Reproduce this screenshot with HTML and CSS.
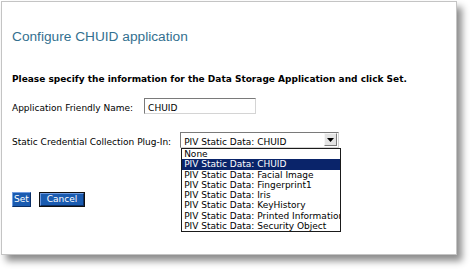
FILE: index.html
```html
<!DOCTYPE html>
<html>
<head>
<meta charset="utf-8">
<link rel="stylesheet" href="styles.css">
</head>
<body>
<div class="panel">
  <h1 class="title">Configure CHUID application</h1>
  <p class="instr">Please specify the information for the Data Storage Application and click Set.</p>
  <div class="row row-name">
    <span class="label label-name">Application Friendly Name:</span>
    <span class="input">CHUID</span>
  </div>
  <div class="row row-plugin">
    <span class="label label-plugin">Static Credential Collection Plug-In:</span>
    <div class="select">
      <span class="select-text">PIV Static Data: CHUID</span>
      <span class="arrow"><svg width="7" height="4" viewBox="0 0 7 4"><path d="M0 0h7L3.5 4z" fill="#000"/></svg></span>
      <ul class="list">
        <li>None</li>
        <li class="sel">PIV Static Data: CHUID</li>
        <li>PIV Static Data: Facial Image</li>
        <li>PIV Static Data: Fingerprint1</li>
        <li>PIV Static Data: Iris</li>
        <li>PIV Static Data: KeyHistory</li>
        <li>PIV Static Data: Printed Information</li>
        <li>PIV Static Data: Security Object</li>
      </ul>
    </div>
  </div>
  <div class="buttons">
    <span class="btn btn-set">Set</span>
    <span class="btn-focus"><span class="btn btn-cancel">Cancel</span></span>
  </div>
</div>
</body>
</html>
```
FILE: styles.css
```css
html, body {
  margin: 0;
  padding: 0;
  background: #ffffff;
}
body {
  width: 474px;
  height: 272px;
  overflow: hidden;
}
.panel {
  margin: 1px 0 0 1px;
  width: 444px;
  height: 252px;
  padding: 0 0 0 10px;
  border: 1px solid #c4c4c4;
  background: #fff;
  box-shadow: 5px 6px 7px rgba(0,0,0,0.45);
  font-family: "DejaVu Sans", Verdana, sans-serif;
  font-size: 9px;
  color: #000;
}
.title {
  margin: 27px 0 0 0;
  font-family: "Liberation Sans", Arial, sans-serif;
  font-weight: normal;
  font-size: 13.7px;
  line-height: 16px;
  color: #33708f;
}
.instr {
  margin: 29px 0 0 0;
  font-weight: bold;
  line-height: 11px;
}
.row {
  display: flex;
  align-items: center;
  height: 16px;
}
.row-name { margin-top: 13px; }
.row-plugin { margin-top: 18px; }
.label {
  line-height: 11px;
  padding-top: 4px;
}
.label-name { margin-right: 11px; }
.label-plugin { margin-right: 9px; }
.input {
  box-sizing: border-box;
  width: 112px;
  height: 16px;
  padding: 4px 3px 0 3px;
  line-height: 11px;
  border: 1px solid;
  border-color: #7a7a7a #d4d4d4 #d4d4d4 #7a7a7a;
}
.select {
  position: relative;
  box-sizing: border-box;
  width: 159px;
  height: 16px;
  display: flex;
  align-items: stretch;
  border: 1px solid;
  border-color: #7a7a7a #d4d4d4 #d4d4d4 #7a7a7a;
}
.select-text {
  flex: 1;
  padding: 4px 0 0 3px;
  line-height: 11px;
}
.arrow {
  width: 11px;
  margin: 0 1px 1px 0;
  background: #e4e4e4;
  border: 1px solid;
  border-color: #f6f6f6 #7c7c7c #7c7c7c #f6f6f6;
  display: flex;
  align-items: center;
  justify-content: center;
}
.list {
  position: absolute;
  left: 0;
  top: 15px;
  width: 158px;
  margin: 0;
  padding: 0;
  list-style: none;
  border: 1px solid #1a1a1a;
  background: #fff;
  overflow: hidden;
}
.list li {
  height: 10.25px;
  line-height: 10.25px;
  padding-left: 2px;
  white-space: nowrap;
  overflow: hidden;
}
.list li.sel {
  background: #0a246a;
  color: #fff;
}
.buttons {
  margin-top: 44px;
  display: flex;
  align-items: center;
}
.btn {
  display: block;
  box-sizing: border-box;
  height: 15px;
  line-height: 12px;
  color: #fff;
  background: #1a5bb0;
  border: 1px solid;
  border-color: #6f9be0 #0b2f66 #0b2f66 #6f9be0;
  text-align: center;
}
.btn-set {
  width: 19px;
}
.btn-focus {
  display: block;
  margin-left: 8px;
  border: 1px solid #111;
}
.btn-cancel {
  width: 44px;
  height: 13px;
  line-height: 11px;
}
```
